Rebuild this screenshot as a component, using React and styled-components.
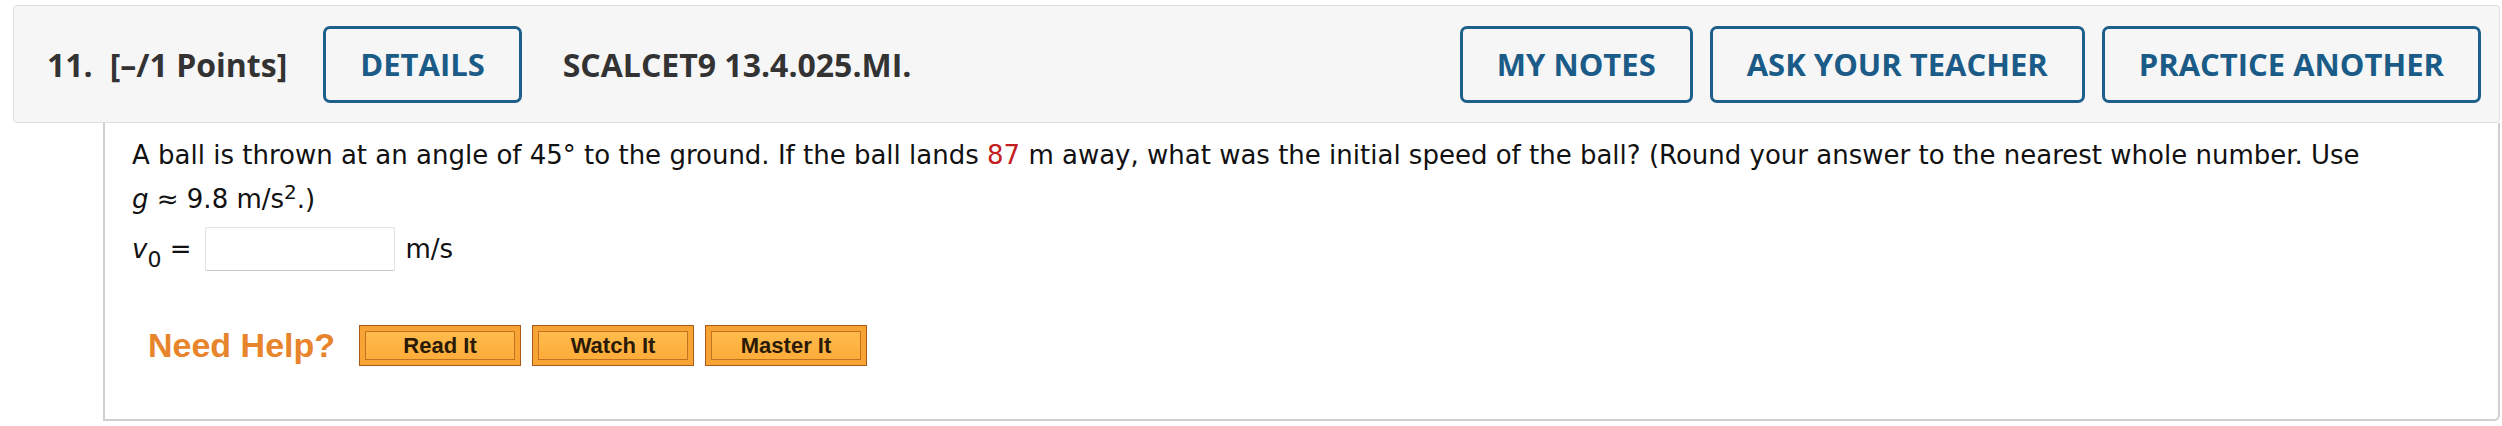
import styled, { createGlobalStyle } from 'styled-components'

const GlobalStyle = createGlobalStyle`
  body{
    margin: 0;
    background: #fff;
  }
`

const Page = styled.div`
  padding: 5px 2px 0 13px;
`

const Header = styled.div`
  display: flex;
  align-items: center;
  box-sizing: border-box;
  height: 118px;
  padding: 0 18px 0 33px;
  background: #f6f6f6;
  border: 1px solid #dedede;
  border-radius: 4px;
  font-family: "Open Sans", sans-serif;
  color: #333;
`

const Label = styled.span`
  font-size: 32px;
  font-weight: 700;
  margin-right: ${p => p.$gap || 0}px;
`

const OutlineButton = styled.button`
  box-sizing: border-box;
  height: 77px;
  padding: 0 34px;
  background: transparent;
  border: 3px solid #1f5f8b;
  border-radius: 7px;
  font-family: "Open Sans", sans-serif;
  font-size: 31px;
  font-weight: 700;
  color: #1b5b87;
  margin-right: ${p => p.$gap || 0}px;
`

const Actions = styled.div`
  display: flex;
  gap: 17px;
  margin-left: auto;
`

const Panel = styled.div`
  margin-left: 90px;
  box-sizing: border-box;
  height: 298px;
  padding: 10px 30px 0 27px;
  border: 2px solid #cfcfcf;
  border-top: none;
  border-radius: 0 0 6px 0;
  font-family: "DejaVu Sans", Verdana, sans-serif;
  font-size: 26px;
  color: #111;
`

const Question = styled.p`
  margin: 0;
  line-height: 44px;

  .value{
    color: #c4201f;
  }
  i{
    font-style: italic;
  }
  sup{
    font-size: 20px;
    line-height: 0;
    vertical-align: 9px;
  }
`

const AnswerRow = styled.div`
  display: flex;
  align-items: center;
  margin-top: 4px;
  height: 48px;

  sub{
    font-size: 22px;
    line-height: 0;
    vertical-align: -9px;
  }
`

const Var = styled.span`
  margin-right: 14px;
  i{
    font-style: italic;
  }
`

const AnswerInput = styled.input`
  box-sizing: border-box;
  width: 190px;
  height: 44px;
  border: 1px solid #e2e2e2;
  border-bottom-color: #c6c6c6;
  border-radius: 2px;
  margin-right: 10px;
  background: #fff;
`

const HelpRow = styled.div`
  display: flex;
  align-items: center;
  margin: 52px 0 0 16px;
`

const NeedHelp = styled.span`
  font-family: "Liberation Sans", Arial, sans-serif;
  font-size: 34px;
  font-weight: 700;
  color: #e8852c;
  margin-right: 24px;
`

const HelpButtons = styled.div`
  display: flex;
  gap: 11px;
`

const HelpButton = styled.button`
  box-sizing: border-box;
  width: 162px;
  height: 41px;
  padding: 5px;
  border: 1px solid #a9591a;
  background: #f7a435;
  cursor: pointer;

  span{
    display: flex;
    align-items: center;
    justify-content: center;
    box-sizing: border-box;
    height: 100%;
    border: 1px solid #c2731f;
    background: linear-gradient(#ffbb4c, #fdac3a);
    font-family: "Liberation Sans", Arial, sans-serif;
    font-size: 22px;
    font-weight: 700;
    color: #2a1a06;
  }
`

function App() {
  return (
    <Page>
      <GlobalStyle />
      <Header>
        <Label $gap={17}>11.</Label>
        <Label $gap={36}>[–/1 Points]</Label>
        <OutlineButton $gap={41}>DETAILS</OutlineButton>
        <Label>SCALCET9 13.4.025.MI.</Label>
        <Actions>
          <OutlineButton>MY NOTES</OutlineButton>
          <OutlineButton>ASK YOUR TEACHER</OutlineButton>
          <OutlineButton>PRACTICE ANOTHER</OutlineButton>
        </Actions>
      </Header>
      <Panel>
        <Question>
          A ball is thrown at an angle of 45° to the ground. If the ball lands <span className='value'>87</span> m away, what was the initial speed of the ball? (Round your answer to the nearest whole number. Use<br />
          <i>g</i> ≈ 9.8 m/s<sup>2</sup>.)
        </Question>
        <AnswerRow>
          <Var><i>v</i><sub>0</sub> =</Var>
          <AnswerInput type="text" />
          <span>m/s</span>
        </AnswerRow>
        <HelpRow>
          <NeedHelp>Need Help?</NeedHelp>
          <HelpButtons>
            <HelpButton><span>Read It</span></HelpButton>
            <HelpButton><span>Watch It</span></HelpButton>
            <HelpButton><span>Master It</span></HelpButton>
          </HelpButtons>
        </HelpRow>
      </Panel>
    </Page>
  )
}

export default App
